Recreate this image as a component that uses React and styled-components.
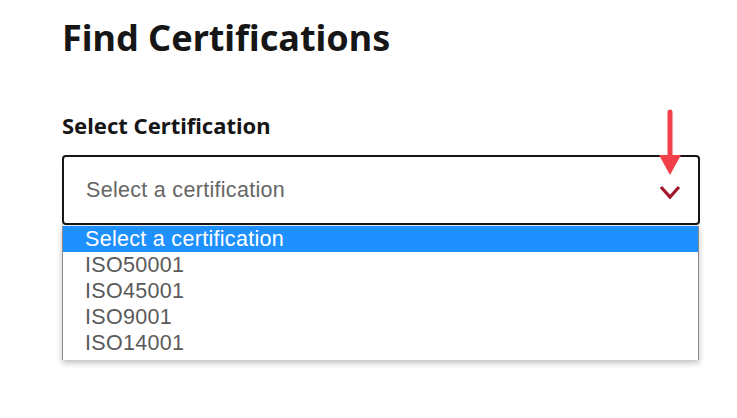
import React from "react";
import styled, { createGlobalStyle } from "styled-components";

const Global = createGlobalStyle`
  body {
    margin: 0;
    background: #fff;
    font-family: "Noto Sans", "Open Sans", sans-serif;
  }
`;

const Page = styled.div`
  padding: 16px 37px 40px 62px;
  width: 638px;
`;

const Title = styled.h1`
  margin: 0 0 52px;
  font-size: 36px;
  font-weight: 700;
  color: #161616;
  line-height: 44px;
`;

const Label = styled.div`
  font-size: 22px;
  font-weight: 700;
  color: #161616;
  line-height: 26px;
  margin-bottom: 17px;
`;

const Field = styled.div`
  position: relative;
`;

const Box = styled.div`
  height: 70px;
  border: 2px solid #161616;
  border-radius: 4px;
  display: flex;
  align-items: center;
  justify-content: space-between;
  padding: 0 17px 0 22px;
  box-sizing: border-box;
  font-family: "Liberation Sans", Arial, sans-serif;
  font-size: 21.5px;
  letter-spacing: 0.3px;
  color: #666;
  box-shadow: 0 2px 4px rgba(0, 0, 0, 0.08);
`;

const Chevron = styled.svg`
  width: 22px;
  height: 15px;
  margin-top: 4px;
`;

const Pointer = styled.svg`
  position: absolute;
  right: 17px;
  top: -46px;
  width: 26px;
  height: 66px;
`;

const List = styled.ul`
  margin: 1px 1px 0 0;
  padding: 0 0 4px;
  list-style: none;
  background: #fff;
  border-left: 1px solid #8a8a8a;
  border-right: 1px solid #8a8a8a;
  box-shadow: 0 3px 6px rgba(0, 0, 0, 0.25);
`;

const Option = styled.li`
  height: 26px;
  line-height: 26px;
  padding-left: 22px;
  font-family: "Liberation Sans", Arial, sans-serif;
  font-size: 21.5px;
  letter-spacing: 0.3px;
  color: ${(p) => (p.$active ? "#fff" : "#5a5a5a")};
  background: ${(p) => (p.$active ? "#1e90ff" : "transparent")};
`;

const options = ["Select a certification", "ISO50001", "ISO45001", "ISO9001", "ISO14001"];

export default function App() {
  return (
    <>
      <Global />
      <Page>
        <Title>Find Certifications</Title>
        <Label>Select Certification</Label>
        <Field>
          <Box>
            <span>Select a certification</span>
            <Chevron viewBox="0 0 22 15">
              <path d="M2 2 L11 12 L20 2" fill="none" stroke="#a3162c" strokeWidth="3.2" />
            </Chevron>
          </Box>
          <Pointer viewBox="0 0 26 66">
            <line x1="13" y1="3" x2="13" y2="48" stroke="#f2404a" strokeWidth="5" strokeLinecap="round" />
            <path d="M2 46 L24 46 L13 66 Z" fill="#f2404a" />
          </Pointer>
          <List>
            {options.map((o, i) => (
              <Option key={o} $active={i === 0}>{o}</Option>
            ))}
          </List>
        </Field>
      </Page>
    </>
  );
}
